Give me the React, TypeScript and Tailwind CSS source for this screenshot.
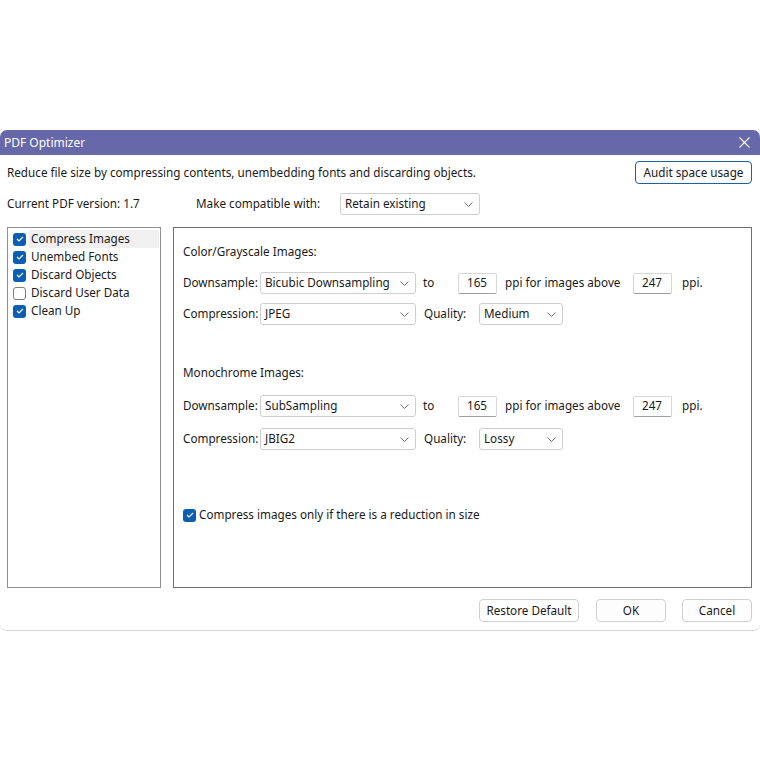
import React from "react";

const font = { fontFamily: '"Noto Sans", "Open Sans", sans-serif' };

function Chevron() {
  return (
    <svg width="9" height="5" viewBox="0 0 9 5" className="shrink-0">
      <path d="M0.5 0.5 L4.5 4.5 L8.5 0.5" fill="none" stroke="#707070" strokeWidth="1" />
    </svg>
  );
}

function Select({ value, w }: { value: string; w: string }) {
  return (
    <div className={`${w} h-[22px] flex items-center justify-between pl-[4px] pr-[6px] border border-[#cfcfcf] rounded-[3px] bg-white text-[#1a1a1a]`}>
      <span>{value}</span>
      <Chevron />
    </div>
  );
}

function Input({ value }: { value: string }) {
  return (
    <div className="w-[39px] h-[21px] flex items-center pl-[8px] border border-[#d6d6d6] border-b-[#a0a0a0] rounded-[2px] bg-white">
      {value}
    </div>
  );
}

function Check({ checked }: { checked: boolean }) {
  if (!checked)
    return <div className="w-[13px] h-[13px] rounded-[3px] border border-[#7d7d7d] bg-white shrink-0" />;
  return (
    <div className="w-[13px] h-[13px] rounded-[3px] bg-[#0a5fb4] flex items-center justify-center shrink-0">
      <svg width="8" height="6" viewBox="0 0 8 6">
        <path d="M1 3 L3 5 L7 1" fill="none" stroke="white" strokeWidth="1.1" />
      </svg>
    </div>
  );
}

function Btn({ label, w, focus }: { label: string; w: string; focus?: boolean }) {
  return (
    <div
      className={`${w} h-[23px] flex items-center justify-center rounded-[4px] bg-[#fdfdfd] border ${
        focus ? "border-[#1f5fa8]" : "border-[#d0d0d0]"
      }`}
    >
      {label}
    </div>
  );
}

export default function App() {
  const items = [
    { label: "Compress Images", checked: true, sel: true },
    { label: "Unembed Fonts", checked: true },
    { label: "Discard Objects", checked: true },
    { label: "Discard User Data", checked: false },
    { label: "Clean Up", checked: true },
  ];
  return (
    <div className="w-[760px] h-[760px] bg-white pt-[130px] text-[11.7px] text-[#1a1a1a]" style={font}>
      <div className="w-[760px] h-[501px] flex flex-col bg-white rounded-[7px] border-b border-[#d4d4e2] overflow-hidden">
        <div className="h-[25px] bg-[#6668a9] flex items-center justify-between pl-[4px] pr-[10px] text-white text-[12px]">
          <span>PDF Optimizer</span>
          <svg width="11" height="11" viewBox="0 0 11 11">
            <path d="M0.5 0.5 L10.5 10.5 M10.5 0.5 L0.5 10.5" stroke="white" strokeWidth="1.1" />
          </svg>
        </div>

        <div className="flex items-center justify-between pl-[7px] pr-[8px] mt-[6px]">
          <span>Reduce file size by compressing contents, unembedding fonts and discarding objects.</span>
          <Btn label="Audit space usage" w="w-[117px]" focus />
        </div>

        <div className="flex items-center pl-[7px] mt-[9px]">
          <span className="w-[189px]">Current PDF version: 1.7</span>
          <span className="w-[144px]">Make compatible with:</span>
          <Select value="Retain existing" w="w-[140px]" />
        </div>

        <div className="flex pl-[7px] pr-[8px] mt-[12px] gap-[12px]">
          <div className="w-[154px] h-[361px] border border-[#8f8f8f] pt-[2px] pl-[5px] pr-[1px]">
            {items.map((it) => (
              <div key={it.label} className="flex items-center h-[18px]">
                <Check checked={it.checked} />
                <div className={`flex-1 h-[18px] flex items-center pl-[2px] ml-[3px] ${it.sel ? "bg-[#f0f0f0]" : ""}`}>
                  {it.label}
                </div>
              </div>
            ))}
          </div>

          <div className="flex-1 h-[361px] border border-[#6f6f6f] pl-[9px] pt-[14px]">
            <div className="h-[20px] flex items-center">Color/Grayscale Images:</div>
            <div className="flex items-center mt-[10px] h-[22px]">
              <span className="w-[77px]">Downsample:</span>
              <Select value="Bicubic Downsampling" w="w-[156px]" />
              <span className="w-[42px] pl-[7px]">to</span>
              <Input value="165" />
              <span className="w-[136px] pl-[8px]">ppi for images above</span>
              <Input value="247" />
              <span className="pl-[10px]">ppi.</span>
            </div>
            <div className="flex items-center mt-[9px] h-[22px]">
              <span className="w-[77px]">Compression:</span>
              <Select value="JPEG" w="w-[156px]" />
              <span className="w-[63px] pl-[8px]">Quality:</span>
              <Select value="Medium" w="w-[84px]" />
            </div>

            <div className="h-[20px] flex items-center mt-[38px]">Monochrome Images:</div>
            <div className="flex items-center mt-[12px] h-[22px]">
              <span className="w-[77px]">Downsample:</span>
              <Select value="SubSampling" w="w-[156px]" />
              <span className="w-[42px] pl-[7px]">to</span>
              <Input value="165" />
              <span className="w-[136px] pl-[8px]">ppi for images above</span>
              <Input value="247" />
              <span className="pl-[10px]">ppi.</span>
            </div>
            <div className="flex items-center mt-[11px] h-[22px]">
              <span className="w-[77px]">Compression:</span>
              <Select value="JBIG2" w="w-[156px]" />
              <span className="w-[63px] pl-[8px]">Quality:</span>
              <Select value="Lossy" w="w-[84px]" />
            </div>

            <div className="flex items-center mt-[56px] h-[18px] gap-[3px]">
              <Check checked />
              <span>Compress images only if there is a reduction in size</span>
            </div>
          </div>
        </div>

        <div className="flex justify-end pr-[8px] mt-[11px]">
          <Btn label="Restore Default" w="w-[100px]" />
          <div className="w-[17px]" />
          <Btn label="OK" w="w-[70px]" />
          <div className="w-[16px]" />
          <Btn label="Cancel" w="w-[70px]" />
        </div>
      </div>
    </div>
  );
}
